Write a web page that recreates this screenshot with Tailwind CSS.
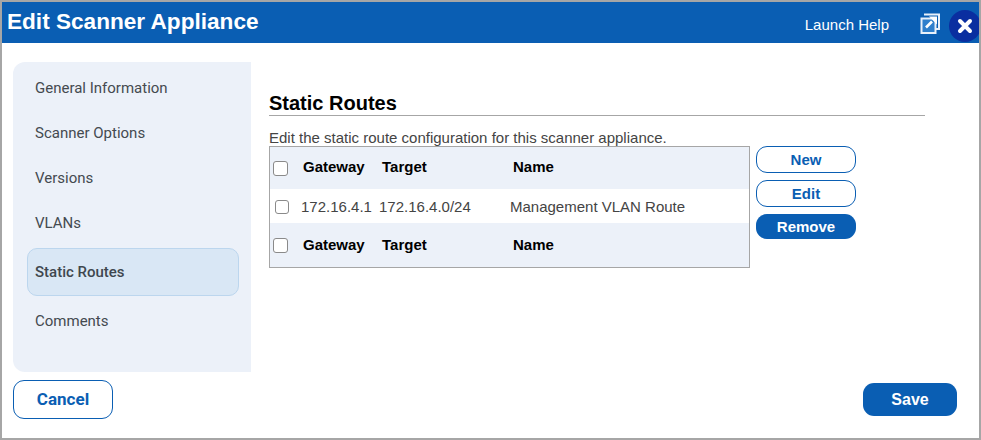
<!DOCTYPE html>
<html>
<head>
<meta charset="utf-8">
<script src="https://cdn.jsdelivr.net/npm/@tailwindcss/browser@4"></script>
</head>
<body class="bg-white">
<div class="w-[981px] h-[440px] border-2 border-[#a6a6a6] bg-white flex flex-col overflow-hidden font-['Liberation_Sans',Arial,sans-serif]">
  <header class="h-[41px] shrink-0 bg-[#0a5eb3] flex items-center text-white">
    <h1 class="ml-[5px] text-[22.6px] font-bold leading-none mb-[1px]">Edit Scanner Appliance</h1>
    <span class="ml-auto text-[15px] mt-[5px]">Launch Help</span>
    <svg class="ml-[31px] mt-[3px]" width="22" height="22" viewBox="0 0 22 22" fill="none">
      <path d="M4 1.500h15v14.500h-3" stroke="#e8f0fa" stroke-width="2"/>
      <rect x="1.500" y="5.500" width="14" height="14.500" fill="#2f7fcc" stroke="#e8f0fa" stroke-width="2"/>
      <path d="M6 14.500l6-6" stroke="#fff" stroke-width="2.600"/>
      <path d="M9 3.500h8v8z" fill="#fff"/>
    </svg>
    <div class="ml-[7px] mr-[-2px] mt-[7px] w-[32px] h-[32px] rounded-full bg-[#0a2ea0] flex items-center justify-center">
      <svg width="16" height="16" viewBox="0 0 16 16"><path d="M3 3l10 10M13 3L3 13" stroke="#fff" stroke-width="4" stroke-linecap="round"/></svg>
    </div>
  </header>

  <div class="flex flex-1 min-h-0 relative">
    <nav class="ml-[11px] mt-[19px] w-[238px] h-[310px] shrink-0 bg-[#ecf1f9] rounded-l-[12px] pl-[14px] pr-[12px] font-['Roboto',sans-serif] text-[15px] text-[#444a50] flex flex-col">
      <a class="h-[45px] mt-[4px] flex items-center pl-[8px]">General Information</a>
      <a class="h-[45px] flex items-center pl-[8px]">Scanner Options</a>
      <a class="h-[45px] flex items-center pl-[8px]">Versions</a>
      <a class="h-[45px] flex items-center pl-[8px]">VLANs</a>
      <a class="h-[48px] mt-[2px] flex items-center pl-[7px] font-medium rounded-[10px] border border-[#bcd6ee] bg-[#d9e7f5] text-[#3f474f]">Static Routes</a>
      <a class="h-[50px] flex items-center pl-[8px]">Comments</a>
    </nav>

    <main class="ml-[18px] w-[656px] pt-[49px]">
      <h2 class="text-[20px] font-bold text-black leading-[22px] border-b border-[#a6a6a6] h-[24px]">Static Routes</h2>
      <p class="text-[15px] text-[#444] leading-[16px] mt-[14px]">Edit the static route configuration for this scanner appliance.</p>
      <div class="flex items-start">
        <div class="w-[481px] h-[122px] border border-[#a6a6a6] bg-[#ecf1f9] text-[15px]">
          <div class="h-[42px] flex items-center font-bold text-black">
            <input type="checkbox" class="appearance-none w-[15px] h-[15px] ml-[3px] rounded-[3px] border border-[#8a8a8a] bg-white">
            <span class="ml-[15px] w-[79px] mb-[2px]">Gateway</span>
            <span class="w-[131px] mb-[2px]">Target</span>
            <span class="mb-[2px]">Name</span>
          </div>
          <div class="h-[34px] flex items-center bg-white text-[#444]">
            <input type="checkbox" class="appearance-none w-[14px] h-[14px] ml-[5px] mt-[2px] rounded-[3px] border border-[#8a8a8a] bg-white">
            <span class="ml-[12px] w-[78px] mt-[2px]">172.16.4.1</span>
            <span class="w-[131px] mt-[2px]">172.16.4.0/24</span>
            <span class="mt-[2px]">Management VLAN Route</span>
          </div>
          <div class="h-[44px] flex items-center font-bold text-black">
            <input type="checkbox" class="appearance-none w-[15px] h-[15px] ml-[3px] rounded-[3px] border border-[#8a8a8a] bg-white">
            <span class="ml-[15px] w-[79px]">Gateway</span>
            <span class="w-[131px]">Target</span>
            <span>Name</span>
          </div>
        </div>
        <div class="ml-[6px] w-[100px] flex flex-col text-[15px] font-bold">
          <button class="h-[27px] pt-[2px] rounded-[11px] border border-[#0a5eb3] text-[#0a5eb3] bg-white">New</button>
          <button class="h-[27px] pt-[2px] mt-[7px] rounded-[11px] border border-[#0a5eb3] text-[#0a5eb3] bg-white">Edit</button>
          <button class="h-[25px] pt-[2px] mt-[7px] rounded-[11px] bg-[#0a5eb3] text-white">Remove</button>
        </div>
      </div>
    </main>
  </div>

  <footer class="h-[66px] shrink-0 flex items-start justify-between pl-[11px] pr-[22px] text-[17px] font-bold font-['Roboto',sans-serif]">
    <button class="w-[100px] h-[39px] mt-[8px] rounded-[11px] border border-[#0a5eb3] text-[#0a5eb3] bg-white">Cancel</button>
    <button class="w-[94px] h-[33px] mt-[11px] rounded-[11px] bg-[#0a5eb3] text-white font-['Liberation_Sans',sans-serif] text-[16px]">Save</button>
  </footer>
</div>
</body>
</html>
